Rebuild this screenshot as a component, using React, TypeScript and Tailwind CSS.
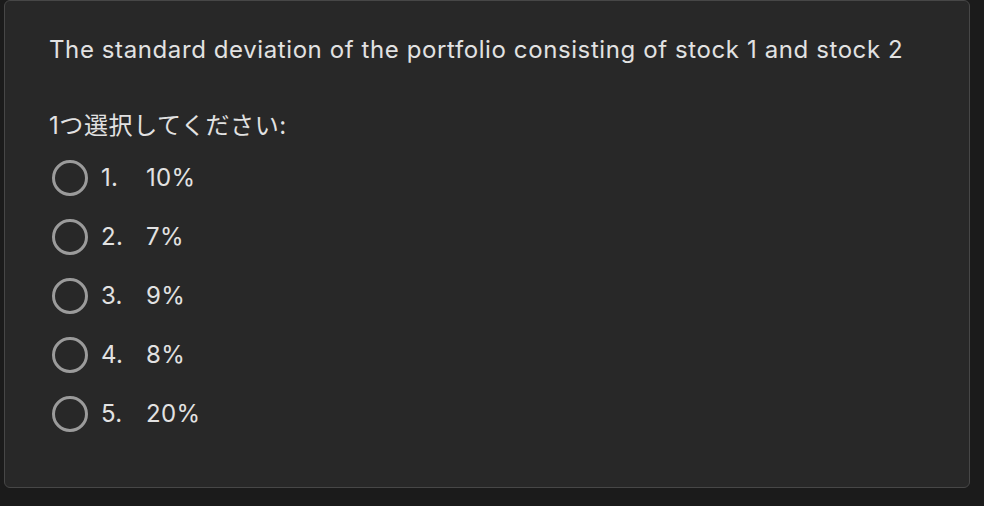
import React from "react";

const options = ["10%", "7%", "9%", "8%", "20%"];

export default function App() {
  return (
    <div
      className="h-[506px] w-[984px] bg-[#1b1b1b] pl-[4px] pr-[14px] overflow-hidden"
      style={{ fontFamily: "Inter, 'Noto Sans CJK JP', sans-serif" }}
    >
      <div className="h-[488px] rounded-[6px] border border-[#474747] bg-[#282828] pl-[44px] pt-[33px] text-[#e2e2e2] tracking-[0.6px]">
        <div className="text-[24px] leading-[32px]">
          The standard deviation of the portfolio consisting of stock 1 and stock 2
        </div>
        <div className="mt-[44px] text-[24px] leading-[32px]">1つ選択してください:</div>
        <div className="mt-[6px] flex flex-col tracking-[0.3px]">
          {options.map((o, i) => (
            <div key={i} className="flex h-[59px] items-center">
              <div className="ml-[3px] h-[36px] w-[36px] rounded-full border-[3px] border-[#9b9b9b]" />
              <span className="ml-[13px] w-[45px] text-[24px] leading-[32px]">{i + 1}.</span>
              <span className="text-[24px] leading-[32px]">{o}</span>
            </div>
          ))}
        </div>
      </div>
    </div>
  );
}
